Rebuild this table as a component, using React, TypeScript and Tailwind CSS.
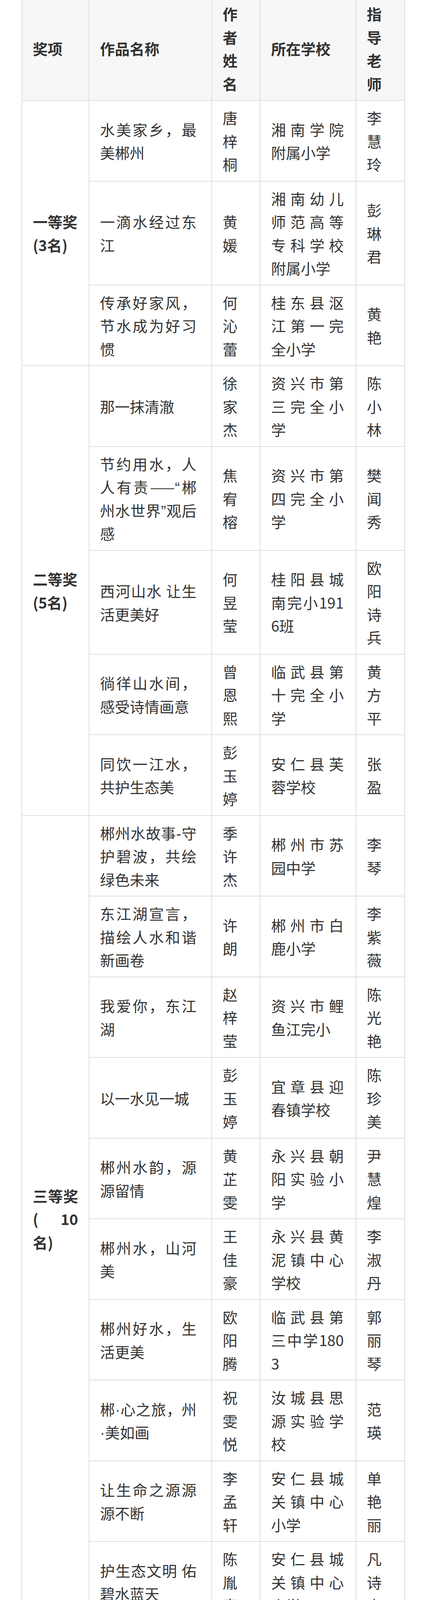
type Entry = [string, string, string, string];

interface Group {
  label: string;
  count: string[];
  spread?: boolean;
  rows: Entry[];
}

const groups: Group[] = [
  {
    label: "一等奖",
    count: ["(3名)"],
    rows: [
      ["水美家乡，最美郴州", "唐梓桐", "湘南学院附属小学", "李慧玲"],
      ["一滴水经过东江", "黄媛", "湘南幼儿师范高等专科学校附属小学", "彭琳君"],
      ["传承好家风，节水成为好习惯", "何沁蕾", "桂东县沤江第一完全小学", "黄艳"],
    ],
  },
  {
    label: "二等奖",
    count: ["(5名)"],
    rows: [
      ["那一抹清澈", "徐家杰", "资兴市第三完全小学", "陈小林"],
      ["节约用水，人人有责——“郴州水世界”观后感", "焦宥榕", "资兴市第四完全小学", "樊闻秀"],
      ["西河山水 让生活更美好", "何昱莹", "桂阳县城南完小1916班", "欧阳诗兵"],
      ["徜徉山水间，感受诗情画意", "曾恩熙", "临武县第十完全小学", "黄方平"],
      ["同饮一江水，共护生态美", "彭玉婷", "安仁县芙蓉学校", "张盈"],
    ],
  },
  {
    label: "三等奖",
    count: ["( 10", "名)"],
    spread: true,
    rows: [
      ["郴州水故事-守护碧波，共绘绿色未来", "季许杰", "郴州市苏园中学", "李琴"],
      ["东江湖宣言，描绘人水和谐新画卷", "许朗", "郴州市白鹿小学", "李紫薇"],
      ["我爱你，东江湖", "赵梓莹", "资兴市鲤鱼江完小", "陈光艳"],
      ["以一水见一城", "彭玉婷", "宜章县迎春镇学校", "陈珍美"],
      ["郴州水韵，源源留情", "黄芷雯", "永兴县朝阳实验小学", "尹慧煌"],
      ["郴州水，山河美", "王佳豪", "永兴县黄泥镇中心学校", "李淑丹"],
      ["郴州好水，生活更美", "欧阳腾", "临武县第三中学1803", "郭丽琴"],
      ["郴·心之旅，州·美如画", "祝雯悦", "汝城县思源实验学校", "范瑛"],
      ["让生命之源源源不断", "李孟轩", "安仁县城关镇中心小学", "单艳丽"],
      ["护生态文明 佑碧水蓝天", "陈胤豪", "安仁县城关镇中心小学", "凡诗卉"],
    ],
  },
  {
    label: "优秀奖",
    count: ["( 15", "名)"],
    spread: true,
    rows: [
      ["郴州好水：自然之美与人文魅力的相遇", "陈雨轩", "郴州市王仙小学", "王初军"],
      ["饮一渠水，爱一湖水", "李芷陌", "郴州市郴县路小学", "邓娜"],
      ["共护东江湖 同饮一江水", "李若芸", "郴州市第五完全小学", "李缘"],
      ["寻美桃源水库", "欧阳瑾怡", "桂阳县士杰学校", "李兰平"],
      ["我是一条小银鱼", "雷灿", "宜章县第二完全小学", "李智月"],
      ["家乡的小溪", "邝灵悦", "宜章县莽山民族学校", "刘志晨"],
      ["水光潋滟，唤醒家乡乐水的美丽", "孟诗琴", "宜章县一六镇学校", "肖小龙"],
      ["守护一江碧水，共建大美郴州", "张子涵", "永兴县马田镇马田中心小学", "陈斌"],
      ["珍视每一滴水，守护生命的源泉", "邝筱蕊", "嘉禾县珠泉完小1806班", "段晓艳"],
      ["天上银河，人间武水", "李锦涵", "临武县城东学校", "唐光军"],
      ["且以四水联动，共护绿意郴州", "刘慧颖", "临武县香花岭完全小学", "曾卫香"],
      ["护一江碧水，水秀城美", "邓罗岚", "桂东县沤江第一完全小学", "何承珠"],
      ["守一处景，护一湖绿", "罗诗文", "桂东县沤江第一完全小学", "杨杜荣"],
      ["从“三千湖”到“水立方”的绿色之旅", "郭昊轩", "桂东县沤江第一完全小学", "周文娟"],
      ["永乐碧水 仁城永乐", "谭诗芸", "安仁县城关镇中心小学", "唐志清"],
    ],
  },
];

const cell =
  "border-2 border-[#dedede] py-[13px] pl-[27px] align-middle text-justify break-all";

const pads = ["pr-[27px]", "pr-[38px]", "pr-[27px]", "pr-[30px]", "pr-[27px]"];

// quotes, dots and hyphens stay narrow (Latin widths) without growing the line box
function rich(s: string) {
  return s.split(/([“”·\-]+)/).map((p, i) =>
    /^[“”·\-]+$/.test(p) ? (
      <span key={i} className="font-['Liberation_Sans',sans-serif] leading-none">
        {p}
      </span>
    ) : (
      p
    )
  );
}

export default function App() {
  return (
    <div className="bg-white">
      <table className="-mt-[10px] ml-[55px] w-[980px] table-fixed border-collapse font-['Noto_Sans_CJK_SC',sans-serif] text-[38px] leading-[59.5px] text-[#333333]">
        <colgroup>
          <col className="w-[172px]" />
          <col className="w-[314px]" />
          <col className="w-[124px]" />
          <col className="w-[245px]" />
          <col className="w-[125px]" />
        </colgroup>
        <thead>
          <tr className="bg-[#f7f7f7]">
            {["奖项", "作品名称", "作者姓名", "所在学校", "指导老师"].map((h, i) => (
              <th key={h} className={`${cell} ${pads[i]} text-left font-bold`}>
                {h}
              </th>
            ))}
          </tr>
        </thead>
        <tbody>
          {groups.map((g) =>
            g.rows.map((r, idx) => (
              <tr key={g.label + idx}>
                {idx === 0 && (
                  <td rowSpan={g.rows.length} className={`${cell} ${pads[0]} font-bold`}>
                    <div className={g.spread ? "[text-align-last:justify]" : ""}>{g.label}</div>
                    {g.count.map((c, i) => (
                      <div
                        key={c}
                        className={
                          g.spread && i < g.count.length - 1
                            ? "[text-align-last:justify]"
                            : ""
                        }
                      >
                        {c}
                      </div>
                    ))}
                  </td>
                )}
                {r.map((v, i) => (
                  <td key={i} className={`${cell} ${pads[i + 1]}`}>
                    {rich(v)}
                  </td>
                ))}
              </tr>
            ))
          )}
        </tbody>
      </table>
    </div>
  );
}
